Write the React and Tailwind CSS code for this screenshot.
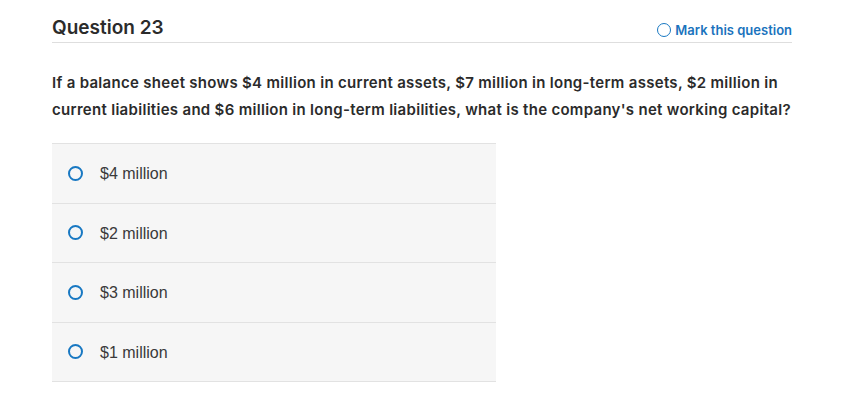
const options = ["$4 million", "$2 million", "$3 million", "$1 million"];

function Radio({ className }) {
  return (
    <span
      className={`inline-block shrink-0 rounded-full border-[#1878c2] bg-transparent ${className}`}
    />
  );
}

export default function App() {
  return (
    <div className="min-h-screen bg-white text-[#2b2b2b] font-['Inter','Liberation_Sans',sans-serif]">
      <div className="w-[740px] ml-[52px] pt-[17px]">
        <div className="flex items-end justify-between border-b border-[#dedede] pb-[3px]">
          <h2 className="text-[19px] leading-[22px] font-semibold">Question 23</h2>
          <button className="flex items-center gap-[4px] text-[13px] font-semibold text-[#1a73bd] translate-y-[1px]">
            <Radio className="w-[14px] h-[14px] border-[1.5px]" />
            Mark this question
          </button>
        </div>

        <p className="mt-[26px] text-[15px] leading-[27px] font-semibold tracking-[0.3px]">
          If a balance sheet shows $4 million in current assets, $7 million in long-term assets, $2 million in
          <br />
          current liabilities and $6 million in long-term liabilities, what is the company's net working capital?
        </p>

        <ul className="mt-[20px] w-[444px] border-t border-[#e2e2e2] bg-[#f6f6f6]">
          {options.map((o) => (
            <li
              key={o}
              className="flex items-center h-[59.5px] border-b border-[#e2e2e2] pl-[16px]"
            >
              <Radio className="w-[15px] h-[15px] border-[2.5px]" />
              <span className="ml-[17px] text-[16px] text-[#3a3a3a] font-['Liberation_Sans',sans-serif] translate-y-[1px]">{o}</span>
            </li>
          ))}
        </ul>
      </div>
    </div>
  );
}
